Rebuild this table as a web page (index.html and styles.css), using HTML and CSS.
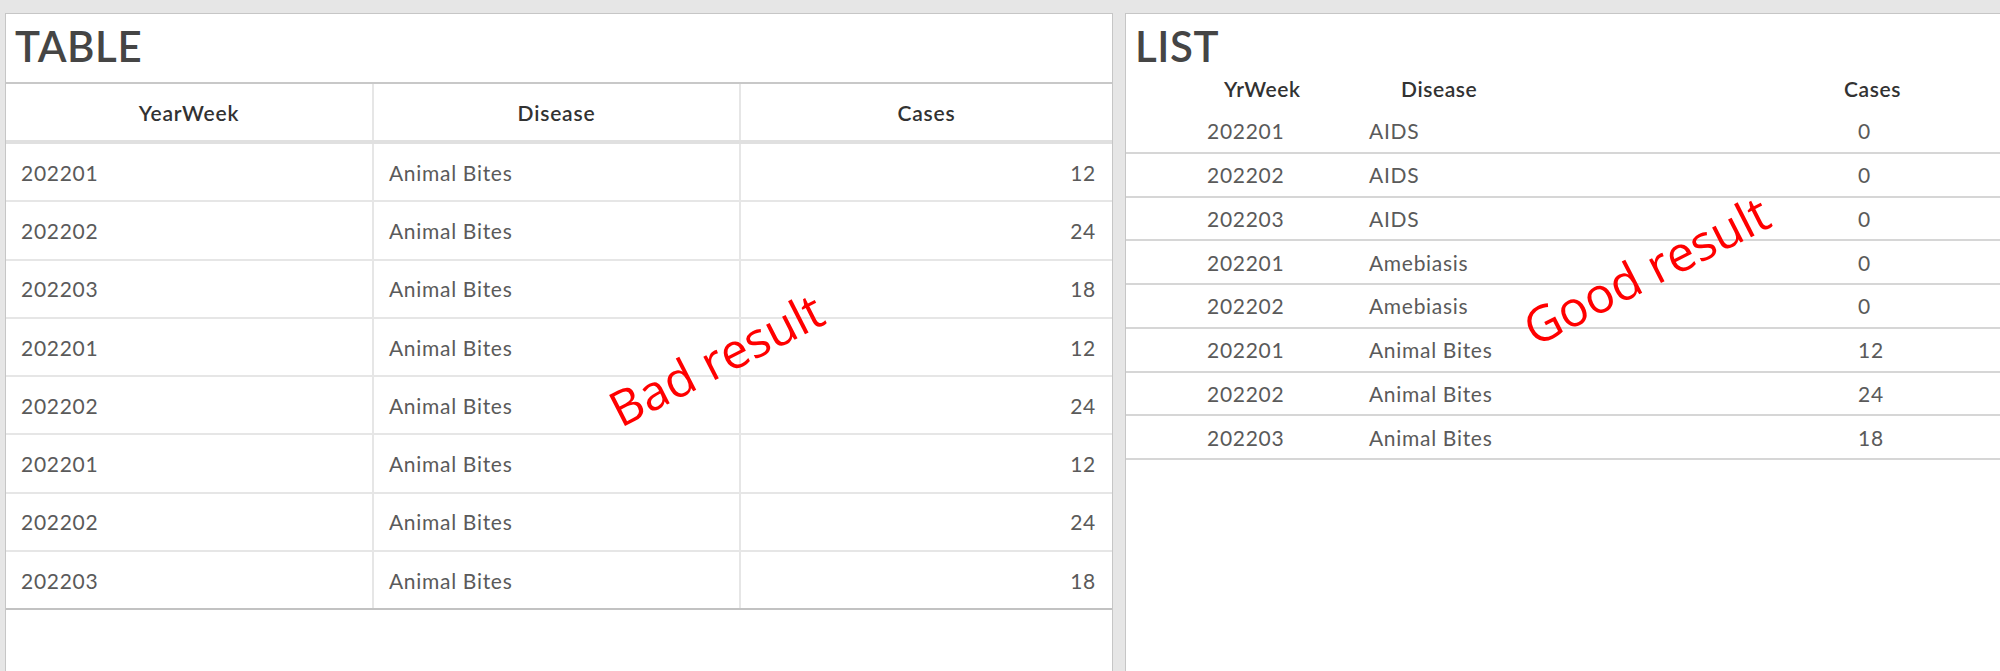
FILE: index.html
```html
<!DOCTYPE html>
<html lang="en">
<head>
<meta charset="utf-8">
<title>Table vs List</title>
<link rel="stylesheet" href="styles.css">
</head>
<body>
<div class="board">
  <section class="panel panel-table">
    <div class="title-bar"><h1 class="title">TABLE</h1></div>
    <div class="grid-table">
      <div class="t-row t-head">
        <div class="t-cell">YearWeek</div>
        <div class="t-cell">Disease</div>
        <div class="t-cell">Cases</div>
      </div>
      <div class="t-row"><div class="t-cell">202201</div><div class="t-cell">Animal Bites</div><div class="t-cell num">12</div></div>
      <div class="t-row"><div class="t-cell">202202</div><div class="t-cell">Animal Bites</div><div class="t-cell num">24</div></div>
      <div class="t-row"><div class="t-cell">202203</div><div class="t-cell">Animal Bites</div><div class="t-cell num">18</div></div>
      <div class="t-row"><div class="t-cell">202201</div><div class="t-cell">Animal Bites</div><div class="t-cell num">12</div></div>
      <div class="t-row"><div class="t-cell">202202</div><div class="t-cell">Animal Bites</div><div class="t-cell num">24</div></div>
      <div class="t-row"><div class="t-cell">202201</div><div class="t-cell">Animal Bites</div><div class="t-cell num">12</div></div>
      <div class="t-row"><div class="t-cell">202202</div><div class="t-cell">Animal Bites</div><div class="t-cell num">24</div></div>
      <div class="t-row t-last"><div class="t-cell">202203</div><div class="t-cell">Animal Bites</div><div class="t-cell num">18</div></div>
    </div>
    <div class="stamp stamp-bad">Bad result</div>
  </section>

  <section class="panel panel-list">
    <h1 class="title title-list">LIST</h1>
    <div class="l-head">
      <div class="l-h1">YrWeek</div>
      <div class="l-h2">Disease</div>
      <div class="l-h3">Cases</div>
    </div>
    <div class="l-row"><div>202201</div><div>AIDS</div><div>0</div></div>
    <div class="l-row"><div>202202</div><div>AIDS</div><div>0</div></div>
    <div class="l-row"><div>202203</div><div>AIDS</div><div>0</div></div>
    <div class="l-row"><div>202201</div><div>Amebiasis</div><div>0</div></div>
    <div class="l-row"><div>202202</div><div>Amebiasis</div><div>0</div></div>
    <div class="l-row"><div>202201</div><div>Animal Bites</div><div>12</div></div>
    <div class="l-row"><div>202202</div><div>Animal Bites</div><div>24</div></div>
    <div class="l-row"><div>202203</div><div>Animal Bites</div><div>18</div></div>
    <div class="stamp stamp-good">Good result</div>
  </section>
</div>
</body>
</html>
```

FILE: styles.css
```css
* { box-sizing: border-box; }

html, body {
  margin: 0;
  padding: 0;
  height: 671px;
  overflow: hidden;
  background: #e6e6e6;
  font-family: Lato, "Noto Sans", sans-serif;
}

.board {
  display: flex;
  gap: 12px;
  padding: 13px 0 0 5px;
}

.panel {
  position: relative;
  background: #ffffff;
  border: 1px solid #c6c6c6;
  height: 720px;
  flex-shrink: 0;
}

.panel-table { width: 1108px; }
.panel-list { width: 1000px; }

.title {
  margin: 0;
  font-size: 42px;
  line-height: 50px;
  font-weight: 600;
  letter-spacing: 0.6px;
  color: #454545;
  padding: 7px 0 0 9px;
}

.title-bar {
  height: 70px;
  border-bottom: 2px solid #c8c8c8;
}

/* TABLE */
.grid-table { display: flex; flex-direction: column; }

.t-row {
  display: grid;
  grid-template-columns: 368px 367px 1fr;
  height: 58.3px;
  border-bottom: 2px solid #e6e6e6;
}

.t-cell {
  display: flex;
  align-items: center;
  padding: 0 15px;
  font-size: 21px;
  letter-spacing: 0.7px;
  color: #5a5a5a;
  border-right: 2px solid #e6e6e6;
}
.t-cell:last-child { border-right: 0; }
.t-cell.num { justify-content: flex-end; padding-right: 16px; }

.t-head {
  height: 60px;
  border-bottom: 4px solid #e0e0e0;
}
.t-head .t-cell {
  justify-content: center;
  font-weight: 600;
  font-size: 21px;
  letter-spacing: 0.8px;
  color: #323232;
}

.t-last { border-bottom-color: #c2c2c2; }

/* LIST */
.l-head {
  display: grid;
  grid-template-columns: 177px 443px 1fr;
  padding: 0 0 4px 98px;
  height: 39px;
  align-items: center;
  font-size: 21px;
  letter-spacing: 0.6px;
  font-weight: 600;
  color: #323232;
}

.l-row {
  display: grid;
  grid-template-columns: 162px 489px 1fr;
  align-items: center;
  padding-left: 81px;
  height: 43.75px;
  border-bottom: 2px solid #d6d6d6;
  font-size: 21px;
  letter-spacing: 0.7px;
  color: #5a5a5a;
}

/* annotation overlays */
.stamp {
  position: absolute;
  font-family: "Open Sans", "Noto Sans", sans-serif;
  font-size: 49px;
  line-height: 1;
  color: #ff0000;
  white-space: nowrap;
  transform: translate(-50%, -50%) rotate(-27deg);
}
.stamp-bad { left: 710px; top: 345px; }
.stamp-good { left: 520px; top: 256px; }
```
